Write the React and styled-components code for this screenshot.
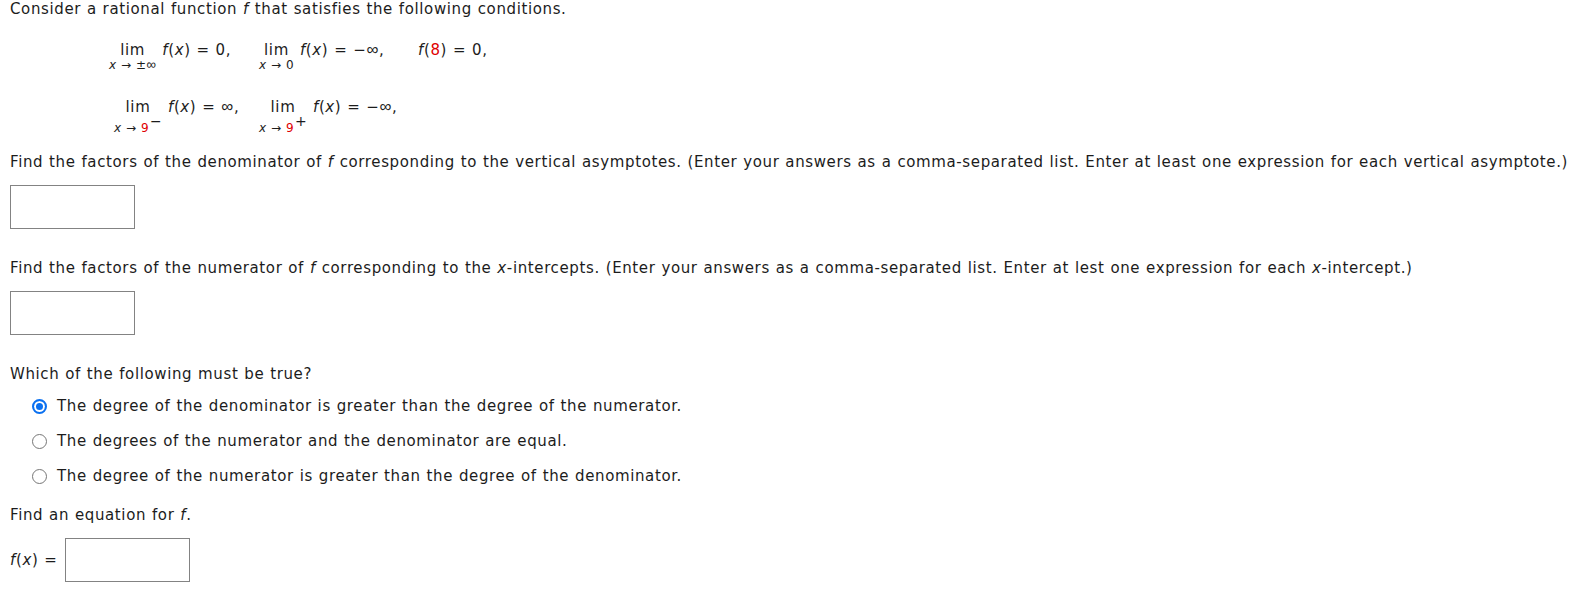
import React from 'react';
import styled, { createGlobalStyle } from 'styled-components';

const GlobalStyle = createGlobalStyle`
  body {
    margin: 0;
    background: #fff;
    font-family: "DejaVu Sans", Verdana, sans-serif;
    font-size: 15px;
    letter-spacing: 0.62px;
    word-spacing: 0.5px;
    color: #1c1c1c;
  }
`;

const Page = styled.div`
  padding: 0 10px;
  line-height: 18px;
`;

const Para = styled.p`
  margin: 0;
  margin-top: ${(p) => p.top || 0}px;
`;

const Var = styled.i`
  font-style: italic;
`;

const Red = styled.span`
  color: #e00000;
`;

const Inf = styled.span`
  font-family: "Liberation Sans", Arial, sans-serif;
  font-size: 1.12em;
  line-height: 0;
`;

// conditions are laid out as a table: the second column lines up across rows
const LimitRow = styled.div`
  display: grid;
  grid-template-columns: ${(p) => p.first}px 159px auto;
  align-items: baseline;
  padding-left: ${(p) => p.indent}px;
  margin-top: ${(p) => p.top}px;
`;

const Expr = styled.span`
  display: inline-flex;
  align-items: baseline;
  white-space: pre;
`;

const Limit = styled.span`
  display: inline-flex;
  flex-direction: column;
  align-items: center;
  margin-right: 6px;
`;

const Lim = styled.span`
  line-height: 18px;
`;

const Sub = styled.span`
  font-size: 12px;
  line-height: 12px;
  letter-spacing: 0.3px;
  white-space: nowrap;
  margin-top: ${(p) => p.drop || 0}px;
`;

const Side = styled.span`
  font-size: 14px;
  position: relative;
  top: -6px;
  margin-left: 1px;
`;

const AnswerBox = styled.input`
  display: block;
  box-sizing: border-box;
  width: 125px;
  height: 44px;
  margin: ${(p) => p.top || 0}px 0 0 0;
  border: 1px solid #838383;
  background: #fff;
  padding: 0 6px;
  font: inherit;
  outline: none;
`;

const Choices = styled.div`
  display: flex;
  flex-direction: column;
  gap: 17px;
  margin-top: 14px;
  padding-left: 22px;
`;

const Choice = styled.label`
  display: flex;
  align-items: center;
  gap: 10px;
  line-height: 18px;
`;

const Radio = styled.span`
  box-sizing: border-box;
  width: 15px;
  height: 15px;
  border-radius: 50%;
  flex: none;
  background: #fff;
  border: ${(p) => (p.checked ? '2px solid #0a70f0' : '1px solid #767676')};
  box-shadow: ${(p) => (p.checked ? 'inset 0 0 0 2px #fff, inset 0 0 0 6px #0a70f0' : 'none')};
`;

const EquationRow = styled.div`
  display: flex;
  align-items: center;
  gap: 8px;
  margin-top: 14px;
`;

const FX = () => (
  <>
    <Var>f</Var>(<Var>x</Var>)
  </>
);

const App = () => (
  <>
    <GlobalStyle />
    <Page>
      <Para>
        Consider a rational function <Var>f</Var> that satisfies the following conditions.
      </Para>

      <LimitRow indent={99} first={150} top={23}>
        <Expr>
          <Limit>
            <Lim>lim</Lim>
            <Sub>
              <Var>x</Var> → ±<Inf>∞</Inf>
            </Sub>
          </Limit>
          <FX />{' = '}0,
        </Expr>
        <Expr>
          <Limit>
            <Lim>lim</Lim>
            <Sub>
              <Var>x</Var> → 0
            </Sub>
          </Limit>
          <FX />{' = '}−<Inf>∞</Inf>,
        </Expr>
        <Expr>
          <Var>f</Var>(<Red>8</Red>){' = '}0,
        </Expr>
      </LimitRow>

      <LimitRow indent={104} first={145} top={27}>
        <Expr>
          <Limit>
            <Lim>lim</Lim>
            <Sub drop={5}>
              <Var>x</Var> → <Red>9</Red>
              <Side>−</Side>
            </Sub>
          </Limit>
          <FX />{' = '}<Inf>∞</Inf>,
        </Expr>
        <Expr>
          <Limit>
            <Lim>lim</Lim>
            <Sub drop={5}>
              <Var>x</Var> → <Red>9</Red>
              <Side>+</Side>
            </Sub>
          </Limit>
          <FX />{' = '}−<Inf>∞</Inf>,
        </Expr>
      </LimitRow>

      <Para top={19}>
        Find the factors of the denominator of <Var>f</Var> corresponding to the vertical
        asymptotes. (Enter your answers as a comma-separated list. Enter at least one
        expression for each vertical asymptote.)
      </Para>
      <AnswerBox top={14} />

      <Para top={30}>
        Find the factors of the numerator of <Var>f</Var> corresponding to the <Var>x</Var>
        -intercepts. (Enter your answers as a comma-separated list. Enter at lest one
        expression for each <Var>x</Var>-intercept.)
      </Para>
      <AnswerBox top={14} />

      <Para top={30}>Which of the following must be true?</Para>
      <Choices>
        <Choice>
          <Radio checked />
          The degree of the denominator is greater than the degree of the numerator.
        </Choice>
        <Choice>
          <Radio />
          The degrees of the numerator and the denominator are equal.
        </Choice>
        <Choice>
          <Radio />
          The degree of the numerator is greater than the degree of the denominator.
        </Choice>
      </Choices>

      <Para top={21}>
        Find an equation for <Var>f</Var>.
      </Para>
      <EquationRow>
        <span>
          <FX /> =
        </span>
        <AnswerBox />
      </EquationRow>
    </Page>
  </>
);

export default App;
